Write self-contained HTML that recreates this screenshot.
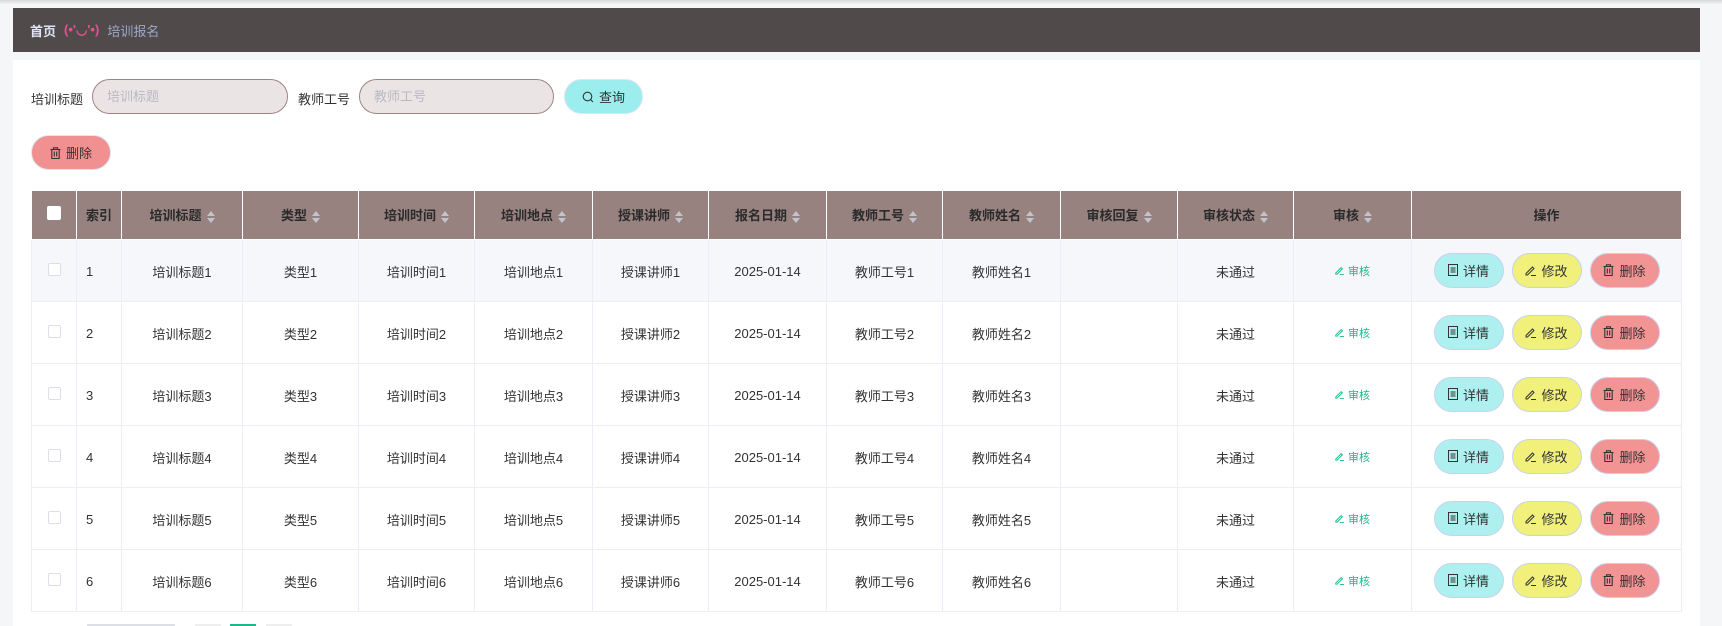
<!DOCTYPE html>
<html><head><meta charset="utf-8"><style>
*{box-sizing:border-box;margin:0;padding:0}
body{width:1722px;height:626px;overflow:hidden;background:#f5f6f8;font-family:"Liberation Sans","Noto Sans CJK SC",sans-serif;font-size:13px;color:#333;position:relative}
.topline{position:absolute;left:0;top:0;width:1722px;height:4px;background:linear-gradient(#d8d8d8,#f2f2f2)}
.hdr{position:absolute;left:13px;top:8px;width:1687px;height:44px;background:#514a4a;display:flex;align-items:center;padding-left:17px;font-size:13px}
.hdr b{color:#dfe3f5}.hdr .f{color:#e8508f;margin:0 8px;font-weight:bold}.hdr .c{color:#9aa8c8}
.panel{position:absolute;left:13px;top:60px;width:1687px;height:566px;background:#fff}
.lbl{position:absolute;top:89px;font-size:13px;color:#333}
.inp{position:absolute;top:79px;height:35px;border:1px solid #a08484;border-radius:18px;background:#ebe4e4;color:#b9b9c4;padding-left:14px;line-height:33px;font-size:13px}
.btn{position:absolute;height:35px;border-radius:18px;display:flex;align-items:center;justify-content:center;font-size:13px;color:#333;border:1px solid #dfe4ee}
svg{margin-right:5px}
table{position:absolute;left:31px;top:191px;width:1650px;border-collapse:collapse;table-layout:fixed}
th{background:#978280;height:48px;border:1px solid #fff;border-top:0;font-weight:bold;font-size:13px;color:#2a2a2a;text-align:center}
td{height:62px;border:1px solid #ebeef5;text-align:center;font-size:13px;color:#333;padding-top:2px}
tr.r1 td{background:#f5f7fa}
td.idx,th.idx{text-align:left;padding-left:9px}
.cb{display:inline-block;width:13px;height:13px;border:1px solid #dcdfe6;border-radius:2px;background:#fff}
th .cb{border:0;width:14px;height:14px}
.s{display:inline-block;vertical-align:middle;margin-left:5px;width:8px;height:12px;position:relative}
.s:before,.s:after{content:"";position:absolute;left:0;border-left:4px solid transparent;border-right:4px solid transparent}
.s:before{top:0;border-bottom:5px solid #c0c4cc}.s:after{bottom:0;border-top:5px solid #c0c4cc}
.sh{color:#19b98a;font-size:11px}
.ob{display:inline-flex;align-items:center;justify-content:center;width:70px;height:35px;border-radius:18px;border:1px solid #c8d2ee;margin:0 4px;font-size:13px;color:#333;vertical-align:middle}
.ops{padding:0;font-size:0}
.d{background:#aef0ef}.m{background:#f0f07a}.x{background:#f29494}
</style></head><body>
<div class="topline"></div>
<div class="hdr"><b>首页</b><span class="f">(•'◡'•)</span><span class="c">培训报名</span></div>
<div class="panel"></div>
<div class="lbl" style="left:31px">培训标题</div>
<div class="inp" style="left:92px;width:196px">培训标题</div>
<div class="lbl" style="left:298px">教师工号</div>
<div class="inp" style="left:359px;width:195px">教师工号</div>
<div class="btn" style="left:564px;top:79px;width:79px;background:#9ceeee"><svg width="12" height="12" viewBox="0 0 12 12" fill="none" stroke="#333" stroke-width="1.1"><circle cx="5.5" cy="5.5" r="4.3"/><path d="M8.6 8.6L11 11"/></svg>查询</div>
<div class="btn" style="left:31px;top:135px;width:80px;background:#f09090"><svg width="11" height="12" viewBox="0 0 11 12" fill="none" stroke="#333" stroke-width="1.1"><path d="M0.5 2.5h10M3.5 2.5V0.8h4v1.7M1.8 2.5v9h7.4v-9M4.3 4.5v5M6.7 4.5v5"/></svg>删除</div>
<table>
<colgroup><col style="width:45px"><col style="width:45px"><col style="width:121px"><col style="width:116px"><col style="width:116px"><col style="width:118px"><col style="width:116px"><col style="width:118px"><col style="width:116px"><col style="width:118px"><col style="width:117px"><col style="width:116px"><col style="width:118px"><col style="width:270px"></colgroup>
<tr><th><span class="cb"></span></th><th class="idx">索引</th><th>培训标题<i class="s"></i></th><th>类型<i class="s"></i></th><th>培训时间<i class="s"></i></th><th>培训地点<i class="s"></i></th><th>授课讲师<i class="s"></i></th><th>报名日期<i class="s"></i></th><th>教师工号<i class="s"></i></th><th>教师姓名<i class="s"></i></th><th>审核回复<i class="s"></i></th><th>审核状态<i class="s"></i></th><th>审核<i class="s"></i></th><th>操作</th></tr>
</table>
<script>
var t=document.querySelector('table');
var doc='<svg width="10" height="12" viewBox="0 0 10 12" fill="none" stroke="#333" stroke-width="1"><rect x="0.5" y="0.5" width="9" height="11"/><path d="M2.5 4h5M2.5 6h5M2.5 8h5"/></svg>';
var pen='<svg width="11" height="11" viewBox="0 0 11 11" fill="none" stroke="#333" stroke-width="1"><path d="M1 8.5L7.5 2l1.5 1.5L2.5 10H1zM6 10.5h5"/></svg>';
var gpen='<svg width="9" height="9" viewBox="0 0 11 11" fill="none" stroke="#19b98a" stroke-width="1.2" style="margin-right:4px"><path d="M1 8.5L7.5 2l1.5 1.5L2.5 10H1zM6 10.5h5"/></svg>';
var trash='<svg width="11" height="12" viewBox="0 0 11 12" fill="none" stroke="#333" stroke-width="1.1"><path d="M0.5 2.5h10M3.5 2.5V0.8h4v1.7M1.8 2.5v9h7.4v-9M4.3 4.5v5M6.7 4.5v5"/></svg>';
for(var i=1;i<=6;i++){var r=t.insertRow();if(i==1)r.className='r1';
r.innerHTML='<td><span class="cb"></span></td><td class="idx">'+i+'</td><td>培训标题'+i+'</td><td>类型'+i+'</td><td>培训时间'+i+'</td><td>培训地点'+i+'</td><td>授课讲师'+i+'</td><td>2025-01-14</td><td>教师工号'+i+'</td><td>教师姓名'+i+'</td><td></td><td>未通过</td><td class="sh">'+gpen+'审核</td><td class="ops"><span class="ob d">'+doc+'详情</span><span class="ob m">'+pen+'修改</span><span class="ob x">'+trash+'删除</span></td>';}
</script>
<div style="position:absolute;left:87px;top:624px;width:88px;height:2px;background:#dcdfe6"></div>
<div style="position:absolute;left:195px;top:624px;width:26px;height:2px;background:#eee"></div>
<div style="position:absolute;left:230px;top:624px;width:26px;height:2px;background:#19b98a"></div>
<div style="position:absolute;left:266px;top:624px;width:26px;height:2px;background:#eee"></div>
</body></html>
